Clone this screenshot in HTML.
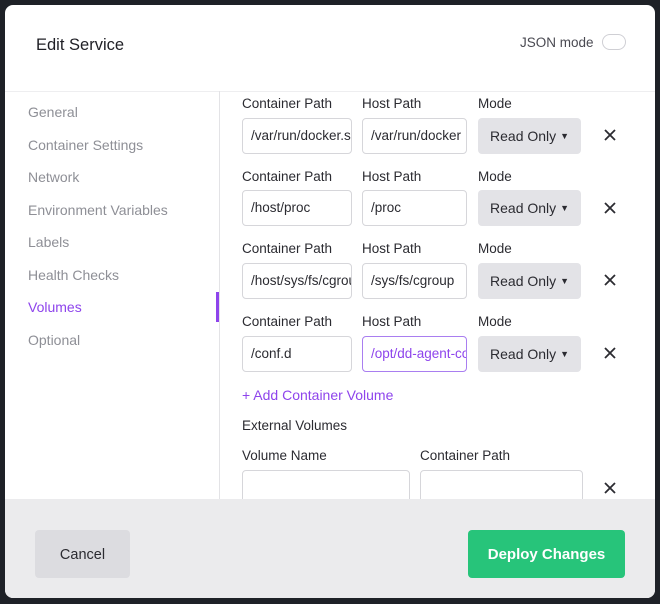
<html><head><style>
body{margin:0;width:660px;height:604px;background:#1e2127;font-family:"Liberation Sans",sans-serif;position:relative;overflow:hidden}
.m{position:absolute;left:5px;top:5px;width:650px;height:593px;background:#fff;border-radius:8px;overflow:hidden}
.a{position:absolute;white-space:nowrap}
.nav{left:23px;font-size:14px;color:#8e8f96}
.lb{font-size:13.5px;color:#2b2b31}
.in{position:absolute;height:34px;border:1px solid #d6d6da;border-radius:4px;background:#fff;font-size:13.5px;line-height:34px;padding-left:8px;color:#2b2b31;overflow:hidden;white-space:nowrap;box-sizing:content-box}
.sel{position:absolute;width:103px;height:36px;background:#e3e3e7;border-radius:4px;font-size:14px;line-height:36px;text-align:center;color:#2b2b31}
.sel span{font-size:9px;vertical-align:2px}
.x{position:absolute;width:12px;height:12px}
</style></head><body>
<div class="m">
<div class="a" style="left:31px;top:31px;font-size:16.5px;color:#1f1f25">Edit Service</div>
<div class="a" style="left:515px;top:30px;font-size:13.5px;color:#4a4a52">JSON mode</div>
<div class="a" style="left:597px;top:29px;width:22px;height:14px;border:1px solid #cfcfd4;border-radius:8px"></div>
<div class="a" style="left:0;top:86px;width:650px;height:1px;background:#eeeef0"></div>
<div class="a" style="left:214px;top:86px;width:1px;height:410px;background:#e3e3e6"></div>
<div class="a" style="left:211px;top:287px;width:3px;height:30px;background:#8e44ec"></div>
<div class="a nav" style="top:99px">General</div>
<div class="a nav" style="top:132px">Container Settings</div>
<div class="a nav" style="top:164px">Network</div>
<div class="a nav" style="top:197px">Environment Variables</div>
<div class="a nav" style="top:229px">Labels</div>
<div class="a nav" style="top:262px">Health Checks</div>
<div class="a nav" style="top:294px;color:#8e44ec">Volumes</div>
<div class="a nav" style="top:327px">Optional</div>

<div class="a lb" style="left:237px;top:91px">Container Path</div><div class="a lb" style="left:357px;top:91px">Host Path</div><div class="a lb" style="left:473px;top:91px">Mode</div>
<div class="in" style="left:237px;top:113px;width:100px">/var/run/docker.s</div><div class="in" style="left:357px;top:113px;width:95px">/var/run/docker</div><div class="sel" style="left:473px;top:113px">Read Only <span>▼</span></div><svg class="x" style="left:599px;top:124px" viewBox="0 0 12 12"><path d="M1 1L11 11M11 1L1 11" stroke="#2b2b31" stroke-width="1.8"/></svg>

<div class="a lb" style="left:237px;top:164px">Container Path</div><div class="a lb" style="left:357px;top:164px">Host Path</div><div class="a lb" style="left:473px;top:164px">Mode</div>
<div class="in" style="left:237px;top:185px;width:100px">/host/proc</div><div class="in" style="left:357px;top:185px;width:95px">/proc</div><div class="sel" style="left:473px;top:185px">Read Only <span>▼</span></div><svg class="x" style="left:599px;top:197px" viewBox="0 0 12 12"><path d="M1 1L11 11M11 1L1 11" stroke="#2b2b31" stroke-width="1.8"/></svg>

<div class="a lb" style="left:237px;top:236px">Container Path</div><div class="a lb" style="left:357px;top:236px">Host Path</div><div class="a lb" style="left:473px;top:236px">Mode</div>
<div class="in" style="left:237px;top:258px;width:100px">/host/sys/fs/cgroup</div><div class="in" style="left:357px;top:258px;width:95px">/sys/fs/cgroup</div><div class="sel" style="left:473px;top:258px">Read Only <span>▼</span></div><svg class="x" style="left:599px;top:269px" viewBox="0 0 12 12"><path d="M1 1L11 11M11 1L1 11" stroke="#2b2b31" stroke-width="1.8"/></svg>

<div class="a lb" style="left:237px;top:309px">Container Path</div><div class="a lb" style="left:357px;top:309px">Host Path</div><div class="a lb" style="left:473px;top:309px">Mode</div>
<div class="in" style="left:237px;top:331px;width:100px">/conf.d</div><div class="in" style="left:357px;top:331px;width:95px;border-color:#a97ef0;color:#8e44ec">/opt/dd-agent-conf</div><div class="sel" style="left:473px;top:331px">Read Only <span>▼</span></div><svg class="x" style="left:599px;top:342px" viewBox="0 0 12 12"><path d="M1 1L11 11M11 1L1 11" stroke="#2b2b31" stroke-width="1.8"/></svg>

<div class="a" style="left:237px;top:382px;font-size:14px;color:#8e44ec">+ Add Container Volume</div>
<div class="a lb" style="left:237px;top:413px">External Volumes</div>
<div class="a lb" style="left:237px;top:443px">Volume Name</div><div class="a lb" style="left:415px;top:443px">Container Path</div>
<div class="in" style="left:237px;top:465px;width:158px;height:40px"></div><div class="in" style="left:415px;top:465px;width:153px;height:40px"></div><svg class="x" style="left:599px;top:477px" viewBox="0 0 12 12"><path d="M1 1L11 11M11 1L1 11" stroke="#2b2b31" stroke-width="1.8"/></svg>

<div class="a" style="left:0;top:494px;width:650px;height:99px;background:#ebebed"></div>
<div class="a" style="left:30px;top:525px;width:95px;height:48px;background:#dcdce0;border-radius:4px;font-size:14.5px;line-height:50px;text-align:center;color:#2b2b31">Cancel</div>
<div class="a" style="left:463px;top:525px;width:157px;height:48px;background:#27c47a;border-radius:4px;font-size:15px;font-weight:bold;line-height:50px;text-align:center;color:#fff">Deploy Changes</div>
</div>
</body></html>
